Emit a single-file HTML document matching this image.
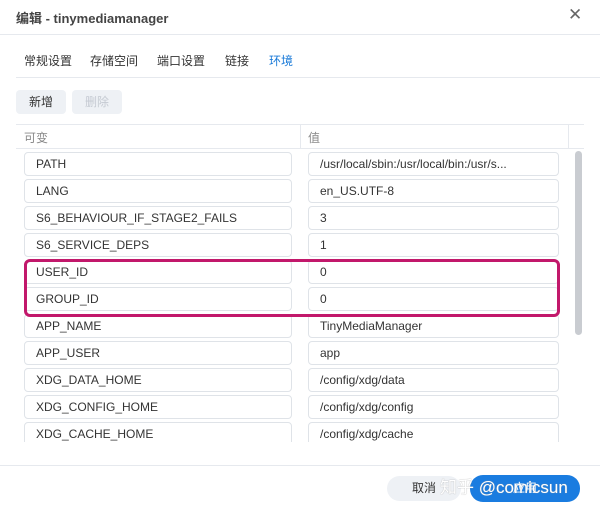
<!DOCTYPE html>
<html><head><meta charset="utf-8"><style>
*{box-sizing:border-box;margin:0;padding:0}
body{width:600px;height:510px;background:#fff;font-family:"Liberation Sans","Noto Sans CJK SC",sans-serif;position:relative;overflow:hidden;color:#333}
.a{position:absolute}
.title{left:16px;top:8px;font-size:13px;font-weight:bold;color:#444}
.x{left:568px;top:5px;font-size:17px;color:#666}
.hl{left:0;width:600px;height:1px;background:#e6e9ee}
.tab{top:52px;font-size:12px;color:#333}
.btn{top:90px;height:24px;border-radius:4px;background:#eef1f5;font-size:12px;text-align:center;line-height:24px}
.hdr{left:16px;top:124px;width:568px;height:25px;border-top:1px solid #e6e9ee;border-bottom:1px solid #e6e9ee;font-size:12px;color:#888}
.in{height:24px;border:1px solid #dfe3e8;border-radius:4px;font-size:12px;line-height:22px;padding-left:11px;color:#333;background:#fff;white-space:nowrap;overflow:hidden}
</style></head><body>
<div class="a title">编辑 - tinymediamanager</div>
<div class="a x">✕</div>
<div class="a hl" style="top:34px"></div>
<div class="a tab" style="left:24px">常规设置</div>
<div class="a tab" style="left:90px">存储空间</div>
<div class="a tab" style="left:157px">端口设置</div>
<div class="a tab" style="left:225px">链接</div>
<div class="a tab" style="left:269px;color:#1a7ad8">环境</div>
<div class="a hl" style="top:77px;left:16px;width:584px"></div>
<div class="a btn" style="left:16px;width:50px">新增</div>
<div class="a btn" style="left:72px;width:50px;color:#c5cad2">删除</div>
<div class="a hdr"><span class="a" style="left:8px;top:4px">可变</span><span class="a" style="left:284px;top:-1px;width:1px;height:25px;background:#e6e9ee"></span><span class="a" style="left:292px;top:4px">值</span><span class="a" style="left:552px;top:-1px;width:1px;height:25px;background:#e6e9ee"></span></div>
<div class="a" style="left:575px;top:151px;width:7px;height:184px;border-radius:4px;background:#c9ccd1"></div>
<div id="rows"></div>
<div class="a" style="left:24px;top:259px;width:536px;height:58px;border:3px solid #c2186b;border-radius:6px"></div>
<div class="a hl" style="top:465px"></div>
<div class="a" style="left:387px;top:476px;width:74px;height:25px;border-radius:13px;background:#eef1f5;font-size:12px;text-align:center;line-height:25px">取消</div>
<div class="a" style="left:470px;top:475px;width:110px;height:27px;border-radius:13px;background:#1a7ce0;color:#fff;font-size:12px;text-align:center;line-height:27px">应用</div>
<div class="a" style="left:440px;top:473px;font-size:17px;color:#fff;text-shadow:0 0 1px #999">知乎 @comicsun</div>
<script>
var d=[["PATH","/usr/local/sbin:/usr/local/bin:/usr/s..."],["LANG","en_US.UTF-8"],["S6_BEHAVIOUR_IF_STAGE2_FAILS","3"],["S6_SERVICE_DEPS","1"],["USER_ID","0"],["GROUP_ID","0"],["APP_NAME","TinyMediaManager"],["APP_USER","app"],["XDG_DATA_HOME","/config/xdg/data"],["XDG_CONFIG_HOME","/config/xdg/config"],["XDG_CACHE_HOME","/config/xdg/cache"]];
var h="";d.forEach(function(r,i){var t=152+i*27;h+='<div class="a in" style="left:24px;top:'+t+'px;width:268px">'+r[0]+'</div><div class="a in" style="left:308px;top:'+t+'px;width:251px">'+r[1]+'</div>';});
document.getElementById("rows").innerHTML=h;
</script>
<div class="a" style="left:16px;top:442px;width:560px;height:20px;background:#fff"></div>
</body></html>
